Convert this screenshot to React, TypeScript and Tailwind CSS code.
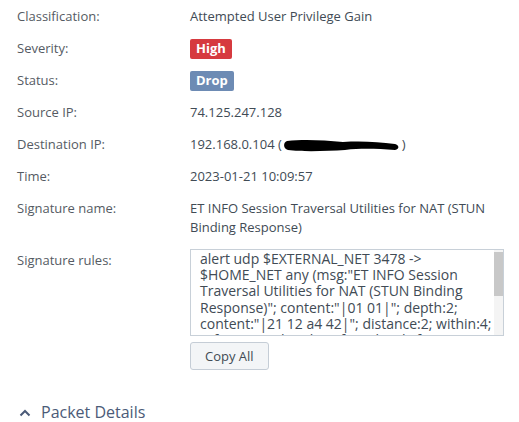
import React from 'react';

const Badge = ({ text, color }: { text: string; color: string }) => (
  <span className={`inline-flex h-[20px] items-center rounded-[2px] px-[6px] text-[13px] font-bold text-white ${color}`}>
    {text}
  </span>
);

const Row = ({ label, children, className = '' }: { label: string; children: React.ReactNode; className?: string }) => (
  <div className={`flex ${className}`}>
    <div className="w-[173px] shrink-0 text-[#555b63]">{label}</div>
    <div className="flex-1 text-[#414b55]">{children}</div>
  </div>
);

const rule =
  'alert udp $EXTERNAL_NET 3478 -> $HOME_NET any (msg:"ET INFO Session Traversal Utilities for NAT (STUN Binding Response)"; content:"|01 01|"; depth:2; content:"|21 12 a4 42|"; distance:2; within:4; reference:url,tools.ietf.org/html/rfc5389; classtype:attempted-user; sid:2016150; rev:2;)';

export default function App() {
  return (
    <div className="h-[422px] w-[519px] overflow-hidden bg-white pl-[17px] pt-[7px] text-[13px] leading-[19px] font-['Open_Sans',sans-serif]">
      <div className="flex flex-col gap-[13px]">
        <Row label="Classification:">Attempted User Privilege Gain</Row>
        <Row label="Severity:" className="h-[19px] items-center">
          <Badge text="High" color="bg-[#d63a3f]" />
        </Row>
        <Row label="Status:" className="h-[19px] items-center">
          <Badge text="Drop" color="bg-[#6d8bb4]" />
        </Row>
        <Row label="Source IP:">74.125.247.128</Row>
        <Row label="Destination IP:">
          <span className="inline-flex items-center">
            192.168.0.104 (
            <svg width="118" height="14" viewBox="0 0 118 14" className="mx-[1px]">
              <path d="M4 3 C20 1 40 2 60 4 C80 3 95 4 112 6 C116 7 117 11 112 12 C95 11 80 10 62 12 C45 13 20 14 5 12 C0 11 0 4 4 3 Z" fill="#000" />
            </svg>
            )
          </span>
        </Row>
        <Row label="Time:">2023-01-21 10:09:57</Row>
        <Row label="Signature name:">ET INFO Session Traversal Utilities for NAT (STUN Binding Response)</Row>
        <Row label="Signature rules:" className="pt-[1px]">
          <div className="-mt-[2px] flex w-[314px] flex-col items-start">
            <div className="flex h-[87px] w-full border border-[#c8d0d8]">
              <div className="flex-1 overflow-hidden pl-[9px] pr-[2px] pt-[1px] text-[14px] leading-[16.2px] text-[#414b55] break-words">
                {rule}
              </div>
              <div className="w-[9px] shrink-0 bg-[#f4f4f4] pt-[2px]">
                <div className="h-[44px] w-full bg-[#c8c8c8]" />
              </div>
            </div>
            <button className="mt-[6px] h-[28px] rounded-[3px] border border-[#c5cdd6] bg-[#f3f5f7] px-[14px] text-[13px] text-[#414b55]">
              Copy All
            </button>
          </div>
        </Row>
      </div>
      <div className="mt-[33px] flex items-center gap-[10px] pl-[2px] text-[16px] text-[#4b5b78]">
        <svg width="12" height="8" viewBox="0 0 12 8">
          <path d="M1.5 6.5 L6 2 L10.5 6.5" stroke="#4b5b78" strokeWidth="2" fill="none" />
        </svg>
        Packet Details
      </div>
    </div>
  );
}
